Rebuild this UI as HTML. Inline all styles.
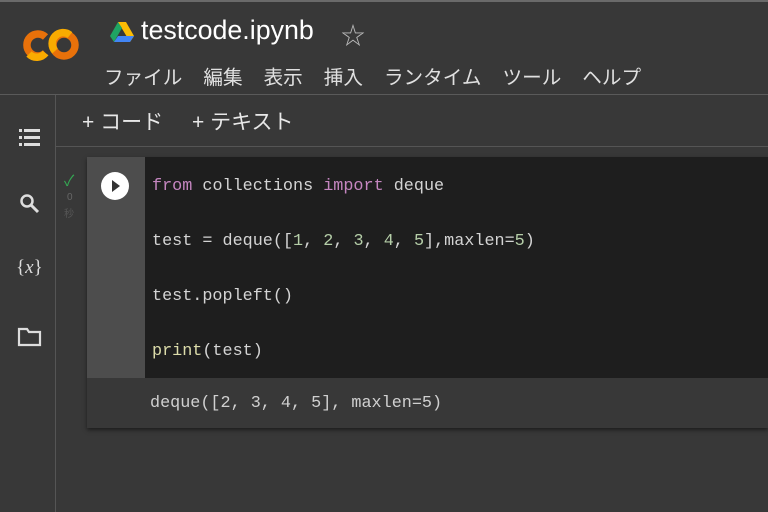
<!DOCTYPE html>
<html><head><meta charset="utf-8"><style>
*{margin:0;padding:0;box-sizing:border-box}
body{width:768px;height:512px;overflow:hidden;background:#383838;font-family:"Liberation Sans","Noto Sans CJK JP",sans-serif;color:#e3e3e3;position:relative}
.a{position:absolute}
.mono{font-family:"Liberation Mono","DejaVu Sans Mono",monospace;font-size:16.8px;white-space:pre;color:#d4d4d4}
.menu span{margin-right:21px}
</style></head><body>
<div class="a" style="left:0;top:0;width:768px;height:2px;background:#6a6a6a"></div>
<svg class="a" style="left:20px;top:27px" width="62" height="36" viewBox="0 0 62 36">
<path d="M25.5 10 A11 11 0 1 0 25.5 26" fill="none" stroke="#e8710a" stroke-width="7.5"/>
<path d="M9 27 A11 11 0 0 0 25.5 26" fill="none" stroke="#f9ab00" stroke-width="7.5"/>
<circle cx="44" cy="18" r="11" fill="none" stroke="#e8710a" stroke-width="7.5"/>
<path d="M35 24 A11 11 0 0 1 50 8" fill="none" stroke="#f9ab00" stroke-width="7.5"/>
</svg>
<svg class="a" style="left:110px;top:22px" width="24" height="20" viewBox="0 0 24 20">
<path d="M8 0 L16 0 L24 14 L20 20 Z" fill="#fbbc04"/>
<path d="M8 0 L0 14 L4 20 L12 6 Z" fill="#1fa463"/>
<path d="M4 20 L20 20 L24 14 L8 14 Z" fill="#4285f4"/>
</svg>
<div class="a" style="left:141px;top:15px;font-size:26.8px;color:#fff">testcode.ipynb</div>
<div class="a" style="left:341px;top:16px;font-size:24px;color:#bbb">☆</div>
<div class="a menu" style="left:104px;top:61px;font-size:19.6px;color:#e0e0e0"><span>ファイル</span><span>編集</span><span>表示</span><span>挿入</span><span>ランタイム</span><span>ツール</span><span>ヘルプ</span></div>
<div class="a" style="left:0;top:94px;width:768px;height:1px;background:#5a5a5a"></div>
<div class="a" style="left:55px;top:95px;width:1px;height:417px;background:#555"></div>
<div class="a" style="left:56px;top:146px;width:712px;height:1px;background:#555"></div>
<div class="a" style="left:82px;top:106px;font-size:21px;color:#e8e8e8">+ コード</div>
<div class="a" style="left:192px;top:106px;font-size:21px;color:#e8e8e8">+ テキスト</div>
<svg class="a" style="left:18px;top:126px" width="24" height="24" viewBox="0 0 24 24" fill="#ddd">
<rect x="1" y="3" width="3" height="3"/><rect x="6" y="3" width="16" height="3"/>
<rect x="1" y="10" width="3" height="3"/><rect x="6" y="10" width="16" height="3"/>
<rect x="1" y="17" width="3" height="3"/><rect x="6" y="17" width="16" height="3"/></svg>
<svg class="a" style="left:19px;top:193px" width="22" height="22" viewBox="0 0 22 22"><circle cx="8" cy="8" r="5.5" fill="none" stroke="#ddd" stroke-width="2.5"/><path d="M12 12 L19 19" stroke="#ddd" stroke-width="3"/></svg>
<div class="a" style="left:16px;top:257px;font-size:19px;color:#ddd;font-family:'Liberation Serif',serif">{<i>x</i>}</div>
<svg class="a" style="left:17px;top:326px" width="26" height="22" viewBox="0 0 26 22"><path d="M2 3 H10 L12 6 H23 V19 H2 Z" fill="none" stroke="#ddd" stroke-width="2.2"/></svg>
<div class="a" style="left:64px;top:170px;color:#34a853;font-size:15px">✓</div>
<div class="a" style="left:67px;top:192px;color:#666;font-size:10px">0</div>
<div class="a" style="left:64px;top:205px;color:#555;font-size:10px">秒</div>
<div class="a" style="left:87px;top:157px;width:681px;height:271px;background:#383838;box-shadow:0 2px 4px rgba(0,0,0,.5)"></div>
<div class="a" style="left:87px;top:157px;width:58px;height:221px;background:#4d4d4d"></div>
<div class="a" style="left:145px;top:157px;width:623px;height:221px;background:#1e1e1e"></div>
<svg class="a" style="left:100px;top:171px" width="30" height="30" viewBox="0 0 30 30"><circle cx="15" cy="15" r="14" fill="#fff"/><path d="M12 9 L20 15 L12 21 Z" fill="#333"/></svg>
<div class="a mono" style="left:152px;top:177px"><span style="color:#c586c0">from</span> collections <span style="color:#c586c0">import</span> deque</div>
<div class="a mono" style="left:152px;top:232px">test = deque([<span style="color:#b5cea8">1</span>, <span style="color:#b5cea8">2</span>, <span style="color:#b5cea8">3</span>, <span style="color:#b5cea8">4</span>, <span style="color:#b5cea8">5</span>],maxlen=<span style="color:#b5cea8">5</span>)</div>
<div class="a mono" style="left:152px;top:287px">test.popleft()</div>
<div class="a mono" style="left:152px;top:342px"><span style="color:#dcdcaa">print</span>(test)</div>
<div class="a mono" style="left:150px;top:394px;color:#d0d0d0">deque([2, 3, 4, 5], maxlen=5)</div>
</body></html>
